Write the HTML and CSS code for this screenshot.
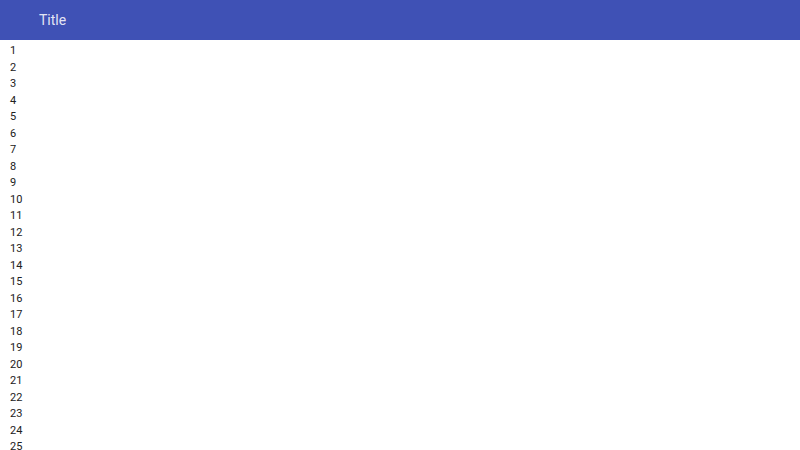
FILE: index.html
```html
<!DOCTYPE html>
<html>
<head>
<meta charset="utf-8">
<link rel="stylesheet" href="styles.css">
</head>
<body>
<header class="bar"><span class="title">Title</span></header>
<ul class="list">
<li>1</li><li>2</li><li>3</li><li>4</li><li>5</li><li>6</li><li>7</li><li>8</li><li>9</li><li>10</li>
<li>11</li><li>12</li><li>13</li><li>14</li><li>15</li><li>16</li><li>17</li><li>18</li><li>19</li><li>20</li>
<li>21</li><li>22</li><li>23</li><li>24</li><li>25</li>
</ul>
</body>
</html>
```
FILE: styles.css
```css
html, body { margin: 0; padding: 0; background: #fff; overflow: hidden; }
body { font-family: Roboto, "Noto Sans", sans-serif; }
.bar {
  height: 40px;
  background: #3f51b5;
  display: flex;
  align-items: center;
  padding-left: 39px;
}
.title { color: rgba(255,255,255,0.87); font-size: 14px; }
.list { list-style: none; margin: 0; padding: 3px 0 0 10px; }
.list li { font-size: 11px; line-height: 16.5px; color: #212121; }
```
